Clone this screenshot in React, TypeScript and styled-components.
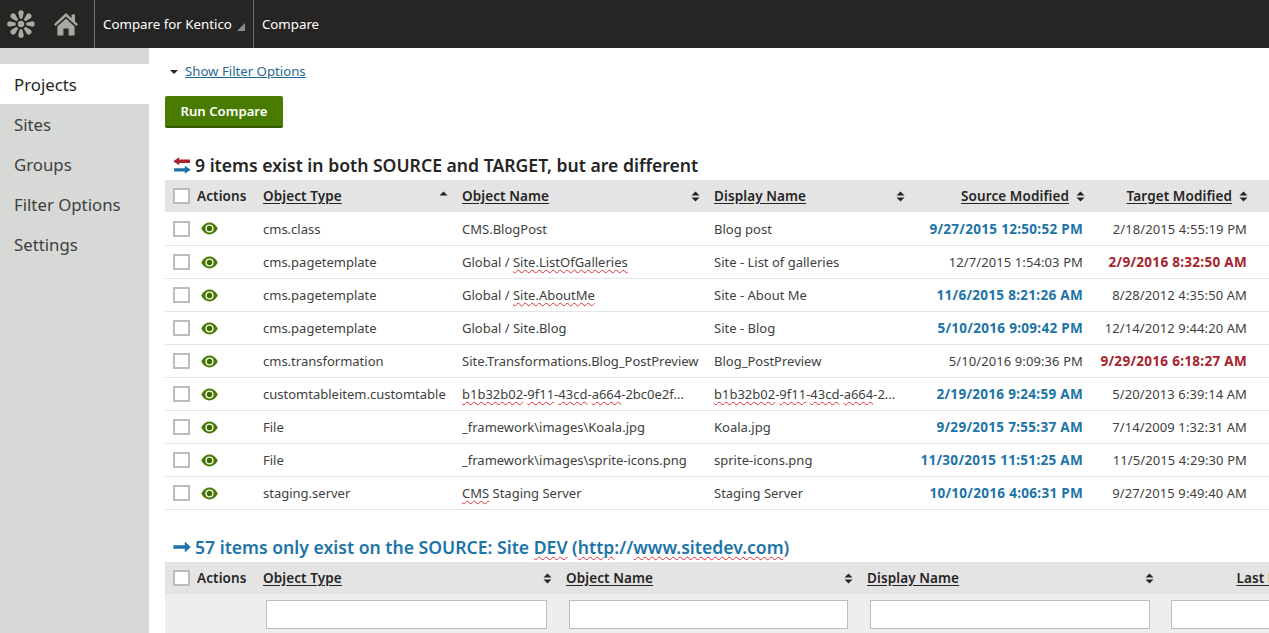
import React from 'react';
import styled, { createGlobalStyle } from 'styled-components';

const FONT = '"Noto Sans", "Open Sans", "Liberation Sans", sans-serif';

const GlobalStyle = createGlobalStyle`
  html, body {
    margin: 0;
    height: 100%;
    overflow: hidden;
    background: #fff;
    font-family: ${FONT};
  }
`;

const Page = styled.div`
  width: 1269px;
  height: 633px;
  overflow: hidden;
  display: flex;
  flex-direction: column;
`;

const TopBar = styled.header`
  height: 48px;
  flex: none;
  background: #262524;
  display: flex;
  align-items: stretch;
  color: #fff;
  font-size: 13.3px;
`;

const LogoCell = styled.div`
  width: 43px;
  display: flex;
  align-items: center;
  justify-content: center;
  padding-right: 2px;
  box-sizing: border-box;
`;

const HomeCell = styled.div`
  width: 51px;
  display: flex;
  align-items: center;
  justify-content: center;
  padding-right: 6px;
  box-sizing: border-box;
`;

const Crumb = styled.div`
  display: flex;
  align-items: center;
  gap: 5px;
  padding: 0 8px;
  border-left: 1px solid #6f6f6f;
`;

const CrumbCaret = styled.span`
  width: 0;
  height: 0;
  margin-top: 5px;
  border-style: solid;
  border-width: 0 0 8px 8px;
  border-color: transparent transparent #8a8a8a transparent;
`;

const Body = styled.div`
  flex: 1;
  display: flex;
  min-height: 0;
`;

const Sidebar = styled.nav`
  width: 149px;
  flex: none;
  background: #d7d9d6;
  padding-top: 16px;
  box-sizing: border-box;
`;

const NavItem = styled.div<{ $active?: boolean }>`
  height: 40px;
  display: flex;
  align-items: center;
  padding-left: 14px;
  font-size: 16.8px;
  color: ${p => (p.$active ? '#262524' : '#403f3d')};
  background: ${p => (p.$active ? '#fff' : 'transparent')};
`;

const Main = styled.main`
  flex: 1;
  min-width: 0;
  overflow: hidden;
  padding: 13px 0 0 16px;
`;

const FilterToggle = styled.div`
  display: flex;
  align-items: center;
  gap: 7px;
  height: 19px;
  padding-left: 5px;
  font-size: 13.2px;
  color: #1f6a96;
`;

const DownCaret = styled.span`
  width: 0;
  height: 0;
  margin-top: 2px;
  border-style: solid;
  border-width: 4px 4px 0 4px;
  border-color: #262524 transparent transparent transparent;
`;

const FilterLink = styled.a`
  text-decoration: underline;
  color: inherit;
`;

const RunButton = styled.button`
  display: block;
  margin-top: 16px;
  width: 118px;
  height: 32px;
  padding: 0;
  border: 0;
  border-bottom: 2px solid #365800;
  border-radius: 2px;
  background: #497b00;
  color: #fff;
  font-family: ${FONT};
  font-size: 13.2px;
  font-weight: 600;
`;

const SectionTitle = styled.h2<{ $tone?: string }>`
  margin: 0;
  height: 30px;
  display: flex;
  align-items: center;
  gap: 4px;
  padding-left: 8px;
  font-size: 17.6px;
  font-weight: 600;
  white-space: nowrap;
  color: ${p => p.$tone || '#262524'};
`;

const Spell = styled.span`
  text-decoration: underline wavy #e0303a 1px;
  text-underline-offset: 2px;
`;

const Grid = styled.table<{ $width: number }>`
  border-collapse: collapse;
  table-layout: fixed;
  width: ${p => p.$width}px;
  font-size: 13px;
  color: #403f3d;

  tbody tr:first-child td {
    height: 33px;
  }
`;

const Th = styled.th<{ $right?: boolean }>`
  height: 32px;
  padding: 0;
  background: #e4e4e4;
  color: #262524;
  font-size: 13.5px;
  font-weight: 600;
  letter-spacing: 0.1px;
  text-align: ${p => (p.$right ? 'right' : 'left')};
  white-space: nowrap;
  overflow: hidden;
`;

const HeadInner = styled.div<{ $right?: boolean; $pad?: number }>`
  display: flex;
  align-items: center;
  justify-content: ${p => (p.$right ? 'flex-end' : 'space-between')};
  padding-right: ${p => p.$pad ?? 0}px;
  gap: 7px;
`;

const HeadLabel = styled.span`
  text-decoration: underline;
  text-underline-offset: 2px;
`;

const Td = styled.td<{ $right?: boolean }>`
  height: 32px;
  padding: 0;
  border-bottom: 1px solid #e4e4e4;
  text-align: ${p => (p.$right ? 'right' : 'left')};
  white-space: nowrap;
  overflow: hidden;
`;

const Stamp = styled.span<{ $tone?: 'source' | 'target'; $pad: number }>`
  display: inline-block;
  padding-right: ${p => p.$pad}px;
  font-size: ${p => (p.$tone ? '13.5px' : '13px')};
  letter-spacing: ${p => (p.$tone ? '0.3px' : '0.1px')};
  font-weight: ${p => (p.$tone ? 700 : 400)};
  color: ${p => (p.$tone === 'source' ? '#1c74a8' : p.$tone === 'target' ? '#a8232c' : '#403f3d')};
`;

const CheckCell = styled.div`
  display: flex;
  padding-left: 8px;
`;

const Check = styled.span`
  display: block;
  width: 13px;
  height: 12px;
  border: 2px solid #bcbcbc;
  background: #fff;
`;

const EyeCell = styled.div`
  padding-left: 4px;
`;

const FilterTd = styled.td`
  height: 39px;
  padding: 6px 0 0;
  vertical-align: top;
  box-sizing: border-box;
  background: #eee;
`;

const FilterBox = styled.input<{ $w: number }>`
  display: block;
  box-sizing: border-box;
  width: ${p => p.$w}px;
  height: 29px;
  margin-left: 3px;
  border: 1px solid #bcbcbc;
  background: #fff;
`;

const Eye = () => (
  <svg width="17" height="13" viewBox="0 0 17 13" style={{ display: 'block' }}>
    <path d="M0.2 6.5C2.4 2.4 5.3 0.6 8.5 0.6S14.6 2.4 16.8 6.5C14.6 10.6 11.7 12.4 8.5 12.4S2.4 10.6 0.2 6.5Z" fill="#497b00" />
    <circle cx="8.5" cy="6.5" r="4.1" fill="#f4f7ee" />
    <circle cx="8.5" cy="6.5" r="2.7" fill="#3f6a00" />
  </svg>
);

const Sort = ({ up }: { up?: boolean }) => (
  <svg width="9" height="11" viewBox="0 0 9 11" style={{ flex: 'none' }}>
    <path d="M0.5 4.6L4.5 0.6L8.5 4.6Z" fill="#262524" />
    {!up && <path d="M0.5 6.4L4.5 10.4L8.5 6.4Z" fill="#262524" />}
  </svg>
);

const KenticoLogo = () => (
  <svg width="30" height="30" viewBox="0 0 30 30">
    <circle cx="15" cy="15" r="3.2" fill="#a9a9a2" />
    {[0, 45, 90, 135, 180, 225, 270, 315].map(a => (
      <path key={a} d="M15 1.2C17 1.2 18 2.6 17.6 4.6L16.2 9.8H13.8L12.4 4.6C12 2.6 13 1.2 15 1.2Z" fill="#a9a9a2" transform={`rotate(${a} 15 15)`} />
    ))}
  </svg>
);

const HomeIcon = () => (
  <svg width="26" height="26" viewBox="0 0 26 26">
    <path d="M1 13.2L13 2L18.6 7.2V3.4H22V10.4L25 13.2L23.4 15L13 5.4L2.6 15Z" fill="#a9a9a2" />
    <path d="M4.4 15.4L13 7.6L21.6 15.4V24.4H15.6V17.4H10.4V24.4H4.4Z" fill="#a9a9a2" />
  </svg>
);

const SwapIcon = () => (
  <svg width="18" height="17" viewBox="0 0 18 17" style={{ flex: 'none' }}>
    <path d="M6.2 0.2L0.2 4.2L6.2 8.2V5.9H17V2.6H6.2Z" fill="#a8232c" />
    <path d="M11.8 8.8L17.8 12.8L11.8 16.8V14.5H1V11.2H11.8Z" fill="#1c74a8" />
  </svg>
);

const ArrowIcon = () => (
  <svg width="18" height="12" viewBox="0 0 18 12" style={{ flex: 'none' }}>
    <path d="M11.8 0.6L17.8 6L11.8 11.4V7.8H0.4V4.2H11.8Z" fill="#1c74a8" />
  </svg>
);

interface Row {
  type: string;
  name: React.ReactNode;
  display: React.ReactNode;
  source: string;
  target: string;
  newer: 'source' | 'target';
}

const guidHead = <><Spell>b1b32b02</Spell>-<Spell>9f11</Spell>-<Spell>43cd</Spell>-<Spell>a664</Spell></>;

const rows: Row[] = [
  { type: 'cms.class', name: 'CMS.BlogPost', display: 'Blog post', source: '9/27/2015 12:50:52 PM', target: '2/18/2015 4:55:19 PM', newer: 'source' },
  { type: 'cms.pagetemplate', name: <>Global / <Spell>Site.ListOfGalleries</Spell></>, display: 'Site - List of galleries', source: '12/7/2015 1:54:03 PM', target: '2/9/2016 8:32:50 AM', newer: 'target' },
  { type: 'cms.pagetemplate', name: <>Global / <Spell>Site.AboutMe</Spell></>, display: 'Site - About Me', source: '11/6/2015 8:21:26 AM', target: '8/28/2012 4:35:50 AM', newer: 'source' },
  { type: 'cms.pagetemplate', name: 'Global / Site.Blog', display: 'Site - Blog', source: '5/10/2016 9:09:42 PM', target: '12/14/2012 9:44:20 AM', newer: 'source' },
  { type: 'cms.transformation', name: 'Site.Transformations.Blog_PostPreview', display: 'Blog_PostPreview', source: '5/10/2016 9:09:36 PM', target: '9/29/2016 6:18:27 AM', newer: 'target' },
  { type: 'customtableitem.customtable', name: <>{guidHead}-2bc0e2f...</>, display: <>{guidHead}-2...</>, source: '2/19/2016 9:24:59 AM', target: '5/20/2013 6:39:14 AM', newer: 'source' },
  { type: 'File', name: '_framework\\images\\Koala.jpg', display: 'Koala.jpg', source: '9/29/2015 7:55:37 AM', target: '7/14/2009 1:32:31 AM', newer: 'source' },
  { type: 'File', name: '_framework\\images\\sprite-icons.png', display: 'sprite-icons.png', source: '11/30/2015 11:51:25 AM', target: '11/5/2015 4:29:30 PM', newer: 'source' },
  { type: 'staging.server', name: <><Spell>CMS</Spell> Staging Server</>, display: 'Staging Server', source: '10/10/2016 4:06:31 PM', target: '9/27/2015 9:49:40 AM', newer: 'source' },
];

const Spacer = styled.div<{ $h: number }>`
  height: ${p => p.$h}px;
`;

export default function App() {
  return (
    <Page>
      <GlobalStyle />
      <TopBar>
        <LogoCell><KenticoLogo /></LogoCell>
        <HomeCell><HomeIcon /></HomeCell>
        <Crumb>Compare for Kentico <CrumbCaret /></Crumb>
        <Crumb>Compare</Crumb>
      </TopBar>
      <Body>
        <Sidebar>
          <NavItem $active>Projects</NavItem>
          <NavItem>Sites</NavItem>
          <NavItem>Groups</NavItem>
          <NavItem>Filter Options</NavItem>
          <NavItem>Settings</NavItem>
        </Sidebar>
        <Main>
          <FilterToggle><DownCaret /><FilterLink>Show Filter Options</FilterLink></FilterToggle>
          <RunButton>Run Compare</RunButton>
          <Spacer $h={22} />
          <SectionTitle><SwapIcon /><span>9 items exist in both SOURCE and TARGET, but are different</span></SectionTitle>
          <Grid $width={1104}>
            <colgroup>
              <col width="32" /><col width="66" /><col width="199" /><col width="252" /><col width="191" /><col width="193" /><col width="171" />
            </colgroup>
            <thead>
              <tr>
                <Th><CheckCell><Check /></CheckCell></Th>
                <Th>Actions</Th>
                <Th><HeadInner $pad={14}><HeadLabel>Object Type</HeadLabel><Sort up /></HeadInner></Th>
                <Th><HeadInner $pad={14}><HeadLabel>Object Name</HeadLabel><Sort /></HeadInner></Th>
                <Th><HeadInner $pad={0}><HeadLabel>Display Name</HeadLabel><Sort /></HeadInner></Th>
                <Th $right><HeadInner $right $pad={13}><HeadLabel>Source Modified</HeadLabel><Sort /></HeadInner></Th>
                <Th $right><HeadInner $right $pad={21}><HeadLabel>Target Modified</HeadLabel><Sort /></HeadInner></Th>
              </tr>
            </thead>
            <tbody>
              {rows.map((r, i) => (
                <tr key={i}>
                  <Td><CheckCell><Check /></CheckCell></Td>
                  <Td><EyeCell><Eye /></EyeCell></Td>
                  <Td>{r.type}</Td>
                  <Td>{r.name}</Td>
                  <Td>{r.display}</Td>
                  <Td $right><Stamp $pad={15} $tone={r.newer === 'source' ? 'source' : undefined}>{r.source}</Stamp></Td>
                  <Td $right><Stamp $pad={22} $tone={r.newer === 'target' ? 'target' : undefined}>{r.target}</Stamp></Td>
                </tr>
              ))}
            </tbody>
          </Grid>
          <Spacer $h={22} />
          <SectionTitle $tone="#1c74a8"><ArrowIcon /><span>57 items only exist on the SOURCE: Site <Spell>DEV</Spell> (<Spell>http</Spell>://<Spell>www.sitedev.com</Spell>)</span></SectionTitle>
          <Grid $width={1180}>
            <colgroup>
              <col width="32" /><col width="66" /><col width="303" /><col width="301" /><col width="301" /><col width="177" />
            </colgroup>
            <thead>
              <tr>
                <Th><CheckCell><Check /></CheckCell></Th>
                <Th>Actions</Th>
                <Th><HeadInner $pad={14}><HeadLabel>Object Type</HeadLabel><Sort /></HeadInner></Th>
                <Th><HeadInner $pad={14}><HeadLabel>Object Name</HeadLabel><Sort /></HeadInner></Th>
                <Th><HeadInner $pad={14}><HeadLabel>Display Name</HeadLabel><Sort /></HeadInner></Th>
                <Th $right><HeadInner $right $pad={18}><HeadLabel>Last Modified</HeadLabel></HeadInner></Th>
              </tr>
              <tr>
                <FilterTd />
                <FilterTd />
                <FilterTd><FilterBox $w={281} /></FilterTd>
                <FilterTd><FilterBox $w={279} /></FilterTd>
                <FilterTd><FilterBox $w={280} /></FilterTd>
                <FilterTd><FilterBox $w={170} /></FilterTd>
              </tr>
            </thead>
          </Grid>
        </Main>
      </Body>
    </Page>
  );
}
